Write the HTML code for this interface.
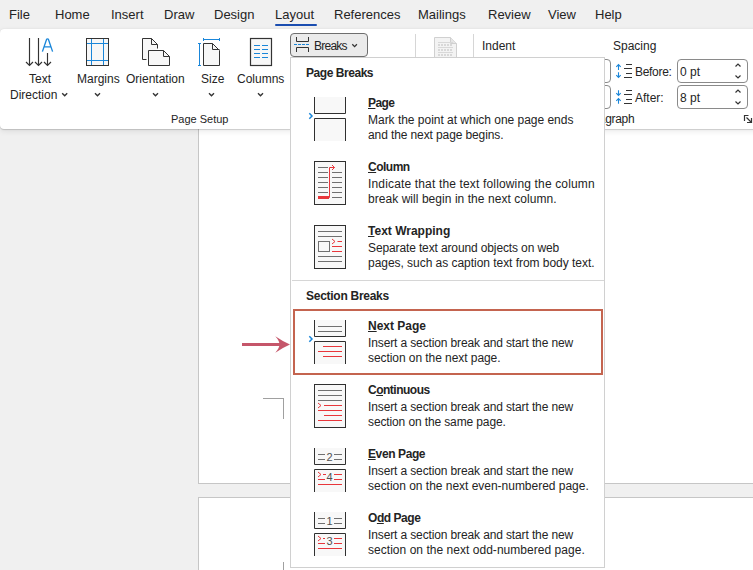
<!DOCTYPE html>
<html><head><meta charset="utf-8">
<style>
*{margin:0;padding:0;box-sizing:border-box}
html,body{width:753px;height:570px;overflow:hidden;background:#f0f0f0;font-family:"Liberation Sans",sans-serif;color:#242424;position:relative}
.a{position:absolute;white-space:nowrap;line-height:1}
.t13{font-size:13px}
.t12{font-size:12px}
.t11{font-size:11px}
.b{font-weight:bold}
.d{left:368px;line-height:15px}
svg{position:absolute;overflow:visible}
#ribbon{position:absolute;left:0;top:29px;width:780px;height:100px;background:#fff;border-radius:4px;box-shadow:0 0 1px rgba(0,0,0,.12),0 1px 1px rgba(0,0,0,.14),0 2px 6px rgba(0,0,0,.09)}
.page{position:absolute;background:#fff;border:1px solid #c6c6c6}
#dd{position:absolute;left:290px;top:57px;width:315px;height:511px;background:#fff;border:1px solid #d0d0d0}
.u{text-decoration:underline;text-underline-offset:1px}
</style></head><body>
<!-- tabs -->
<div class="a t13" style="left:9px;top:8px">File</div>
<div class="a t13" style="left:55px;top:8px">Home</div>
<div class="a t13" style="left:111px;top:8px">Insert</div>
<div class="a t13" style="left:164px;top:8px">Draw</div>
<div class="a t13" style="left:214px;top:8px">Design</div>
<div class="a t13" style="left:275px;top:8px">Layout</div>
<div style="position:absolute;left:275px;top:24px;width:42px;height:2px;background:#1a4db0;border-radius:1px"></div>
<div class="a t13" style="left:334px;top:8px">References</div>
<div class="a t13" style="left:418px;top:8px">Mailings</div>
<div class="a t13" style="left:488px;top:8px">Review</div>
<div class="a t13" style="left:548px;top:8px">View</div>
<div class="a t13" style="left:595px;top:8px">Help</div>

<!-- document canvas pages -->
<div class="page" style="left:198px;top:100px;width:600px;height:384px"></div>
<div class="page" style="left:198px;top:497px;width:600px;height:100px"></div>
<div style="position:absolute;left:263px;top:398px;width:21px;height:1px;background:#a0a0a0"></div>
<div style="position:absolute;left:283px;top:398px;width:1px;height:21px;background:#a0a0a0"></div>
<div style="position:absolute;left:283px;top:562px;width:1px;height:10px;background:#a0a0a0"></div>
<!-- arrow -->
<svg style="left:0;top:0" width="753" height="570"><path d="M242 343.1 H280 V345.9 H242 Z" fill="#c5566a"/><path d="M290 344.5 Q282 341 275.3 336.3 Q279.5 341 279.5 344.5 Q279.5 348 275.3 352.7 Q282 348 290 344.5 Z" fill="#c5566a"/></svg>

<!-- ribbon -->
<div id="ribbon"></div>
<div class="a t12" style="left:29px;top:73px">Text</div>
<div class="a t12" style="left:10px;top:89px">Direction</div>
<div class="a t12" style="left:77px;top:73px">Margins</div>
<div class="a t12" style="left:126px;top:73px">Orientation</div>
<div class="a t12" style="left:201px;top:73px">Size</div>
<div class="a t12" style="left:237px;top:73px">Columns</div>
<div class="a t11" style="left:171px;top:114px">Page Setup</div>

<div class="a t12" style="left:482px;top:40px">Indent</div>
<div class="a t12" style="left:613px;top:40px">Spacing</div>
<div class="a t12" style="left:635px;top:66px;letter-spacing:-0.3px">Before:</div>
<div class="a t12" style="left:635px;top:92px">After:</div>
<div class="a t12" style="left:581px;top:113px;letter-spacing:-0.3px">Paragraph</div>
<div style="position:absolute;left:677px;top:59px;width:71px;height:24px;border:1px solid #8a8a8a;border-radius:4px;background:#fff"></div>
<div style="position:absolute;left:677px;top:85px;width:71px;height:24px;border:1px solid #8a8a8a;border-radius:4px;background:#fff"></div>
<div class="a t12" style="left:680px;top:66px">0 pt</div>
<div class="a t12" style="left:680px;top:92px">8 pt</div>
<div style="position:absolute;left:560px;top:59px;width:51px;height:24px;border:1px solid #8a8a8a;border-radius:4px;background:#fff"></div>
<div style="position:absolute;left:560px;top:85px;width:51px;height:24px;border:1px solid #8a8a8a;border-radius:4px;background:#fff"></div>

<!-- Breaks button -->
<div style="position:absolute;left:290px;top:33px;width:78px;height:24px;border:1px solid #6e6e6e;border-radius:4px;background:#ebebeb"></div>
<div class="a t12" style="left:314px;top:40px;letter-spacing:-0.75px">Breaks</div>
<div style="position:absolute;left:415px;top:34px;width:1px;height:24px;background:#d6d6d6"></div>
<div style="position:absolute;left:473px;top:34px;width:1px;height:24px;background:#d6d6d6"></div>

<svg style="left:0;top:0" width="753" height="570">
<g fill="none" stroke="#333" stroke-width="1.15">
<path d="M29.5 38 V65.5 M26 62 L29.5 65.5 L33 62"/>
<path d="M38.5 38 V65.5 M35 62 L38.5 65.5 L42 62"/>
<path d="M47.5 53 V65.5 M44 62 L47.5 65.5 L51 62"/>
</g>
<path d="M42.4 51.6 L46.6 39.3 Q47.5 38.3 48.4 39.3 L52.6 51.6 M44.1 46.8 H50.9" fill="none" stroke="#1a86d9" stroke-width="1.35"/>
<rect x="86.5" y="38.5" width="22" height="27" fill="#f7f7f7" stroke="#333"/>
<path d="M91.5 39 V65 M103.5 39 V65 M87 43.5 H108 M87 60.5 H108" stroke="#1a86d9" stroke-width="1" fill="none"/>
<path d="M146.5 59.5 H142.5 V38.5 H151.5 L157.5 44.5 V48.5" fill="#f7f7f7" stroke="#333"/>
<path d="M151.5 38.5 V44.5 H157.5" fill="none" stroke="#333"/>
<path d="M148.5 50.5 H163.5 L169.5 56.5 V65.5 H148.5 Z" fill="#f7f7f7" stroke="#333"/>
<path d="M163.5 50.5 V56.5 H169.5" fill="none" stroke="#333"/>
<path d="M199.5 43.5 V65.5 M198 43.5 H201 M198 65.5 H201 M203.5 39.5 H219.5 M203.5 38 V41 M219.5 38 V41" stroke="#1a86d9" fill="none"/>
<path d="M203.5 43.5 H212.5 L219.5 50.5 V65.5 H203.5 Z" fill="#f7f7f7" stroke="#333"/>
<path d="M212.5 43.5 V49.5 H219.5" fill="none" stroke="#333"/>
<rect x="250.5" y="38.5" width="21" height="27" fill="#f7f7f7" stroke="#333" stroke-width="1.2"/>
<path d="M254 45.5 H260 M262 45.5 H268 M254 49.5 H260 M262 49.5 H268 M254 53.5 H260 M262 53.5 H268 M254 57.5 H260 M262 57.5 H268" stroke="#1a86d9" stroke-width="1.1"/>
<g fill="none" stroke="#333" stroke-width="1.4">
<path d="M62.2 93.2 L64.7 95.7 L67.2 93.2"/>
<path d="M95 93.2 L97.5 95.7 L100 93.2"/>
<path d="M153 93.2 L155.5 95.7 L158 93.2"/>
<path d="M209 93.2 L211.5 95.7 L214 93.2"/>
<path d="M258 93.2 L260.5 95.7 L263 93.2"/>
</g>
<!-- greyed page icon -->
<path d="M434.5 58 V37.5 H450.5 L456.5 43.5 V58" fill="#f3f3f3" stroke="#d0d0d0"/>
<path d="M450.5 37.5 V43.5 H456.5" fill="#e6e6e6" stroke="#d0d0d0"/>
<g fill="#d8d8d8"><rect x="438" y="42" width="15" height="1"/><rect x="438" y="47" width="15" height="1"/><rect x="438" y="52" width="15" height="1"/>
<rect x="438" y="44" width="2" height="2"/><rect x="441" y="44" width="2" height="2"/><rect x="444" y="44" width="2" height="2"/><rect x="447" y="44" width="2" height="2"/><rect x="450" y="44" width="2" height="2"/>
<rect x="438" y="49" width="2" height="2"/><rect x="441" y="49" width="2" height="2"/><rect x="444" y="49" width="2" height="2"/><rect x="447" y="49" width="2" height="2"/><rect x="450" y="49" width="2" height="2"/>
<rect x="438" y="54" width="2" height="2"/><rect x="441" y="54" width="2" height="2"/><rect x="444" y="54" width="2" height="2"/><rect x="447" y="54" width="2" height="2"/><rect x="450" y="54" width="2" height="2"/></g>
<!-- spacing icons -->
<g stroke="#1a86d9" fill="none" stroke-width="1.1">
<path d="M618.5 64.8 V70 M616.3 66.8 L618.5 64.6 L620.7 66.8 M618.5 72.2 V77.4 M616.3 75.2 L618.5 77.4 L620.7 75.2"/>
<path d="M618.5 90.2 V95.4 M616.3 93.2 L618.5 95.4 L620.7 93.2 M618.5 98.6 V103.8 M616.3 100.8 L618.5 98.6 L620.7 100.8"/>
</g>
<g stroke="#333" fill="none">
<path d="M626 64.5 H632 M624 68.5 H632 M626 73.5 H632 M624 77.5 H632"/>
<path d="M626 90.5 H632 M624 94.5 H632 M626 99.5 H632 M624 103.5 H632"/>
</g>
<g stroke="#333" fill="none" stroke-width="1.2">
<path d="M735.5 66.5 L738 64 L740.5 66.5 M735.5 75.5 L738 78 L740.5 75.5"/>
<path d="M735.5 92.5 L738 90 L740.5 92.5 M735.5 101.5 L738 104 L740.5 101.5"/>
<path d="M748.5 115.5 H744.5 V121 M746.5 117.5 L751 122 M751.5 118 V122.5 H747"/>
</g>
<!-- breaks icon -->
<g stroke="#333" fill="none">
<path d="M296.5 37 V41.5 H308.5 V37"/>
<path d="M296.5 52 V47.5 H308.5 V52"/>
</g>
<path d="M294 44.5 H309" stroke="#1a86d9" stroke-dasharray="3 1"/>
<path d="M352.3 44.3 L354.6 46.6 L356.9 44.3" stroke="#333" stroke-width="1.3" fill="none"/>
</svg>

<!-- dropdown -->
<div id="dd"></div>
<div class="a t12 b" style="left:306px;top:67px;letter-spacing:-0.45px">Page Breaks</div>
<div class="a t12 b" style="left:368px;top:97px;letter-spacing:-0.6px"><span class="u">P</span>age</div>
<div class="a t12 d" style="top:113px;letter-spacing:-0.02px">Mark the point at which one page ends</div>
<div class="a t12 d" style="top:128px;letter-spacing:-0.107px">and the next page begins.</div>
<div class="a t12 b" style="left:368px;top:161px;letter-spacing:-0.5px"><span class="u">C</span>olumn</div>
<div class="a t12 d" style="top:177px;letter-spacing:0.156px">Indicate that the text following the column</div>
<div class="a t12 d" style="top:192px;letter-spacing:0.05px">break will begin in the next column.</div>
<div class="a t12 b" style="left:368px;top:225px"><span class="u">T</span>ext Wrapping</div>
<div class="a t12 d" style="top:241px;letter-spacing:-0.126px">Separate text around objects on web</div>
<div class="a t12 d" style="top:256px;letter-spacing:-0.038px">pages, such as caption text from body text.</div>
<div style="position:absolute;left:292px;top:280px;width:312px;height:1px;background:#d6d6d6"></div>
<div class="a t12 b" style="left:306px;top:290px;letter-spacing:-0.27px">Section Breaks</div>
<div style="position:absolute;left:293px;top:309px;width:310px;height:66px;border:2px solid #c4644f"></div>
<div class="a t12 b" style="left:368px;top:320px"><span class="u">N</span>ext Page</div>
<div class="a t12 d" style="top:336px;letter-spacing:-0.127px">Insert a section break and start the new</div>
<div class="a t12 d" style="top:351px;letter-spacing:-0.065px">section on the next page.</div>
<div class="a t12 b" style="left:368px;top:384px;letter-spacing:-0.5px">C<span class="u">o</span>ntinuous</div>
<div class="a t12 d" style="top:400px;letter-spacing:-0.127px">Insert a section break and start the new</div>
<div class="a t12 d" style="top:415px;letter-spacing:-0.122px">section on the same page.</div>
<div class="a t12 b" style="left:368px;top:448px;letter-spacing:-0.4px"><span class="u">E</span>ven Page</div>
<div class="a t12 d" style="top:464px;letter-spacing:-0.127px">Insert a section break and start the new</div>
<div class="a t12 d" style="top:479px;letter-spacing:-0.02px">section on the next even-numbered page.</div>
<div class="a t12 b" style="left:368px;top:512px;letter-spacing:-0.45px">O<span class="u">d</span>d Page</div>
<div class="a t12 d" style="top:528px;letter-spacing:-0.127px">Insert a section break and start the new</div>
<div class="a t12 d" style="top:543px;letter-spacing:0.034px">section on the next odd-numbered page.</div>
<svg style="left:0;top:0" width="753" height="570">
<!-- page -->
<rect x="315" y="97" width="30" height="16" fill="#f8f8f8"/>
<rect x="315" y="119" width="30" height="22" fill="#f8f8f8"/>
<path d="M314.5 97 V113.5 H345.5 V97 M314.5 141 V118.5 H345.5 V141" fill="none" stroke="#303030"/>
<path d="M309.3 113.3 L312 116 L309.3 118.7" fill="none" stroke="#1a86d9" stroke-width="1.5"/>
<!-- column -->
<rect x="314.5" y="161.5" width="31" height="43" fill="#f8f8f8" stroke="#303030"/>
<path d="M318 167.5 H328 M318 172.5 H328 M318 177.5 H328 M318 182.5 H328 M318 187.5 H328 M318 192.5 H328 M332 172.5 H342 M332 177.5 H342 M332 182.5 H342 M332 187.5 H342 M332 192.5 H342 M332 197.5 H342" stroke="#707070"/>
<path d="M318 197.5 H329.5 V167.5 H334.5 M332 165 L334.5 167.5 L332 170" fill="none" stroke="#e8363b"/>
<rect x="318" y="196" width="11" height="3" fill="#e8363b"/>
<!-- text wrapping -->
<rect x="314.5" y="225.5" width="31" height="43" fill="#f8f8f8" stroke="#303030"/>
<path d="M318 231.5 H342 M318 236.5 H342 M318 256.5 H342 M318 261.5 H342" stroke="#707070"/>
<rect x="318.5" y="241.5" width="11" height="10" fill="#f8f8f8" stroke="#707070"/>
<path d="M332 239 L335 241.5 L332 244 M337.5 241.5 H342 M332 246.5 H342 M332 251.5 H342" fill="none" stroke="#e8363b"/>
<!-- next page -->
<rect x="315" y="320" width="30" height="16" fill="#f8f8f8"/>
<rect x="315" y="342" width="30" height="22" fill="#f8f8f8"/>
<path d="M314.5 320 V336.5 H345.5 V320 M314.5 364 V341.5 H345.5 V364" fill="none" stroke="#303030"/>
<path d="M318 326.5 H342 M318 331.5 H342" stroke="#707070"/>
<path d="M323 346.5 H342 M318 351.5 H342 M323 356.5 H342" stroke="#e8363b"/>
<path d="M309.3 336.3 L312 339 L309.3 341.7" fill="none" stroke="#1a86d9" stroke-width="1.5"/>
<!-- continuous -->
<rect x="314.5" y="384.5" width="31" height="43" fill="#f8f8f8" stroke="#303030"/>
<path d="M318 390.5 H342 M318 395.5 H342 M318 400.5 H342" stroke="#707070"/>
<path d="M318 403 L321 405.5 L318 408 M324 405.5 H342 M318 410.5 H342 M324 415.5 H342 M318 420.5 H342" fill="none" stroke="#e8363b"/>
<!-- even page -->
<rect x="315" y="448" width="30" height="16" fill="#f8f8f8"/>
<rect x="315" y="470" width="30" height="22" fill="#f8f8f8"/>
<path d="M314.5 448 V464.5 H345.5 V448 M314.5 492 V469.5 H345.5 V492" fill="none" stroke="#303030"/>
<path d="M318 454.5 H325 M334 454.5 H342 M318 459.5 H325 M334 459.5 H342" stroke="#707070"/>
<path d="M318 472 L321 474.5 L318 477 M323 474.5 H326 M334 474.5 H342 M318 479.5 H325 M334 479.5 H342 M318 484.5 H342" fill="none" stroke="#e8363b"/>
<text x="329.5" y="461" font-family="Liberation Sans" font-size="11" fill="#505050" text-anchor="middle">2</text>
<text x="329.5" y="481" font-family="Liberation Sans" font-size="11" fill="#505050" text-anchor="middle">4</text>
<!-- odd page -->
<rect x="315" y="512" width="30" height="16" fill="#f8f8f8"/>
<rect x="315" y="534" width="30" height="22" fill="#f8f8f8"/>
<path d="M314.5 512 V528.5 H345.5 V512 M314.5 556 V533.5 H345.5 V556" fill="none" stroke="#303030"/>
<path d="M318 518.5 H325 M334 518.5 H342 M318 523.5 H325 M334 523.5 H342" stroke="#707070"/>
<path d="M318 536 L321 538.5 L318 541 M323 538.5 H325 M334 538.5 H342 M318 543.5 H325 M334 543.5 H342 M318 548.5 H342" fill="none" stroke="#e8363b"/>
<text x="329.5" y="525" font-family="Liberation Sans" font-size="11" fill="#505050" text-anchor="middle">1</text>
<text x="329.5" y="545" font-family="Liberation Sans" font-size="11" fill="#505050" text-anchor="middle">3</text>
</svg>
</body></html>
